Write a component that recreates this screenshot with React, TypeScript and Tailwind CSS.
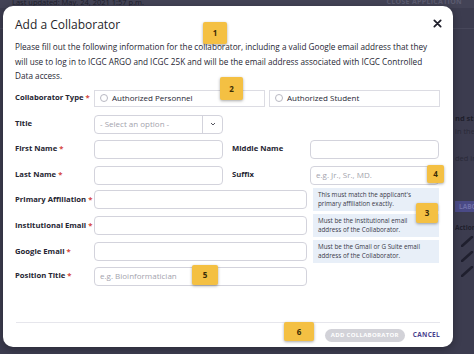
import React from 'react';

const Req = () => <span className="ml-[2px] text-[#d4453b]">*</span>;

const Badge = ({ n, className }: { n: number; className: string }) => (
  <div
    className={`absolute flex items-center justify-center rounded-[2px] bg-[#f4c043] text-[8px] font-bold text-[#3b2c05] shadow-[0_1px_3px_rgba(0,0,0,0.35)] ${className}`}
  >
    {n}
  </div>
);

const Input = ({ placeholder, className }: { placeholder?: string; className: string }) => (
  <div
    className={`flex h-[19px] items-center rounded-[4px] border border-[#d3d3dc] bg-white pl-[5px] text-[8px] text-[#a3a3ad] ${className}`}
  >
    {placeholder}
  </div>
);

const Help = ({ lines }: { lines: string[] }) => (
  <div className="flex h-[23px] w-[126px] flex-col justify-center bg-[#e8eff8] pl-[5px] text-[6.3px] leading-[8.5px] text-[#3a3a48]">
    {lines.map((l) => (
      <div key={l}>{l}</div>
    ))}
  </div>
);

const Label = ({ children, className = 'w-[79px]' }: { children: React.ReactNode; className?: string }) => (
  <div className={`shrink-0 whitespace-nowrap text-[7.7px] font-bold text-[#262633] ${className}`}>{children}</div>
);

export default function App() {
  return (
    <div
      className="relative h-[354px] w-[474px] overflow-hidden bg-[#3c3c4f]"
      style={{ fontFamily: '"Open Sans", "Noto Sans", sans-serif' }}
    >
      {/* page behind the dialog */}
      <div className="flex h-[8px] items-start justify-between bg-[#434356] px-[12px]">
        <div className="-mt-[3px] text-[7.5px] text-[#1f1f2c]">Last updated: May. 24, 2021 1:57 p.m.</div>
        <div className="-mt-[3px] text-[7px] font-bold tracking-[0.3px] text-[#5b5b70]">CLOSE APPLICATION</div>
      </div>
      <div className="mt-[20px] h-[1px] bg-[#47475a]" />
      <div className="whitespace-nowrap pl-[455px] text-[7.5px] leading-[13px] text-[#1f1f2c]">
        <div className="mt-[83px] font-bold">nd students</div>
        <div className="text-[#2a2a38]">in the</div>
        <div className="mt-[14px] text-[#2a2a38]">ded im</div>
        <div className="mt-[36px] flex h-[11px] items-center bg-[#4a4a86] pl-[4px] text-[6.5px] font-bold text-[#6f6fa8]">
          LABORATORY
        </div>
        <div className="mt-[9px] text-[6.5px] font-bold">Actions</div>
        <div className="mt-[2px] flex flex-col gap-[4px] pl-[6px]">
          {[0, 1, 2].map((i) => (
            <svg key={i} width="14" height="11" viewBox="0 0 14 11">
              <path d="M1 10 L11 1" stroke="#1f1f2e" strokeWidth="2.5" strokeLinecap="round" />
            </svg>
          ))}
        </div>
      </div>

      {/* dialog */}
      <div className="absolute left-[3px] top-[6px] h-[341px] w-[450px] rounded-[10px] bg-white pl-[12px] pr-[13px] shadow-[0_2px_8px_rgba(0,0,0,0.3)]">
        <div className="flex items-start justify-between pt-[12px]">
          <div className="text-[12px] leading-[14px] text-[#1f1f2b]">Add a Collaborator</div>
          <svg width="9" height="9" viewBox="0 0 10 10" className="-mr-[2px] mt-[1px]">
            <path d="M1.5 1.5 L8.5 8.5 M8.5 1.5 L1.5 8.5" stroke="#1f1f2b" strokeWidth="2" strokeLinecap="round" />
          </svg>
        </div>
        <p className="mt-[8px] whitespace-nowrap text-[8.2px] leading-[14.5px] text-[#262633]">
          Please fill out the following information for the collaborator, including a valid Google email address that they
          <br />
          will use to log in to ICGC ARGO and ICGC 25K and will be the email address associated with ICGC Controlled
          <br />
          Data access.
        </p>

        <div className="mt-[6px] flex h-[17px] items-center">
          <Label>
            Collaborator Type<Req />
          </Label>
          <div className="flex gap-[4px]">
            {['Authorized Personnel', 'Authorized Student'].map((t) => (
              <div
                key={t}
                className="flex h-[17px] w-[171px] items-center gap-[4px] border border-[#dcdce3] pl-[5px] text-[8px] text-[#262633]"
              >
                <span className="h-[8px] w-[8px] rounded-full border border-[#b8b8c2]" />
                {t}
              </div>
            ))}
          </div>
        </div>

        <div className="mt-[8px] flex h-[19px] items-center">
          <Label>Title</Label>
          <div className="flex h-[19px] w-[129px] items-center rounded-[4px] border border-[#d3d3dc] text-[8px] text-[#a3a3ad]">
            <div className="flex-1 pl-[5px]">- Select an option -</div>
            <div className="flex h-full w-[20px] items-center justify-center border-l border-[#d3d3dc]">
              <svg width="6" height="4" viewBox="0 0 6 4">
                <path d="M1 1 L3 3 L5 1" stroke="#555560" strokeWidth="1" fill="none" />
              </svg>
            </div>
          </div>
        </div>

        <div className="mt-[6px] flex h-[19px] items-center">
          <Label>
            First Name<Req />
          </Label>
          <Input className="w-[129px]" />
          <Label className="ml-[9px] w-[78px]">Middle Name</Label>
          <Input className="w-[129px]" />
        </div>

        <div className="mt-[7px] flex h-[19px] items-center">
          <Label>
            Last Name<Req />
          </Label>
          <Input className="w-[129px]" />
          <Label className="ml-[9px] w-[78px]">Suffix</Label>
          <Input className="w-[129px]" placeholder="e.g. Jr., Sr., MD." />
        </div>

        <div className="mt-[3px] flex flex-col gap-[2px]">
          <div className="flex h-[24px] items-center">
            <Label>
              Primary Affiliation<Req />
            </Label>
            <Input className="w-[213px]" />
            <div className="ml-[6px]">
              <Help lines={["This must match the applicant's", 'primary affiliation exactly.']} />
            </div>
          </div>
          <div className="flex h-[24px] items-center">
            <Label>
              Institutional Email<Req />
            </Label>
            <Input className="w-[213px]" />
            <div className="ml-[6px]">
              <Help lines={['Must be the institutional email', 'address of the Collaborator.']} />
            </div>
          </div>
          <div className="flex h-[24px] items-center">
            <Label>
              Google Email<Req />
            </Label>
            <Input className="w-[213px]" />
            <div className="ml-[6px]">
              <Help lines={['Must be the Gmail or G Suite email', 'address of the Collaborator.']} />
            </div>
          </div>
        </div>

        <div className="mt-[3px] flex h-[19px] items-center">
          <Label>
            Position Title<Req />
          </Label>
          <Input className="w-[213px]" placeholder="e.g. Bioinformatician" />
        </div>

        <div className="ml-[1px] mt-[36px] h-px bg-[#e6e6ec]" />
        <div className="mt-[6px] flex items-center justify-end gap-[8px]">
          <div className="flex h-[13px] w-[80px] items-center justify-center rounded-full bg-[#d2d2d8] text-[6px] font-bold tracking-[0.3px] text-white">
            ADD COLLABORATOR
          </div>
          <div className="text-[6.5px] font-bold tracking-[0.3px] text-[#4a3f8e]">CANCEL</div>
        </div>

        <Badge n={1} className="left-[200px] top-[16px] h-[22px] w-[24px]" />
        <Badge n={2} className="left-[217px] top-[71px] h-[23px] w-[23px]" />
        <Badge n={3} className="left-[413px] top-[197px] h-[20px] w-[22px]" />
        <Badge n={4} className="left-[424px] top-[159px] h-[18px] w-[17px]" />
        <Badge n={5} className="left-[189px] top-[259px] h-[20px] w-[26px]" />
        <Badge n={6} className="left-[281px] top-[316px] h-[19px] w-[30px]" />
      </div>
    </div>
  );
}
